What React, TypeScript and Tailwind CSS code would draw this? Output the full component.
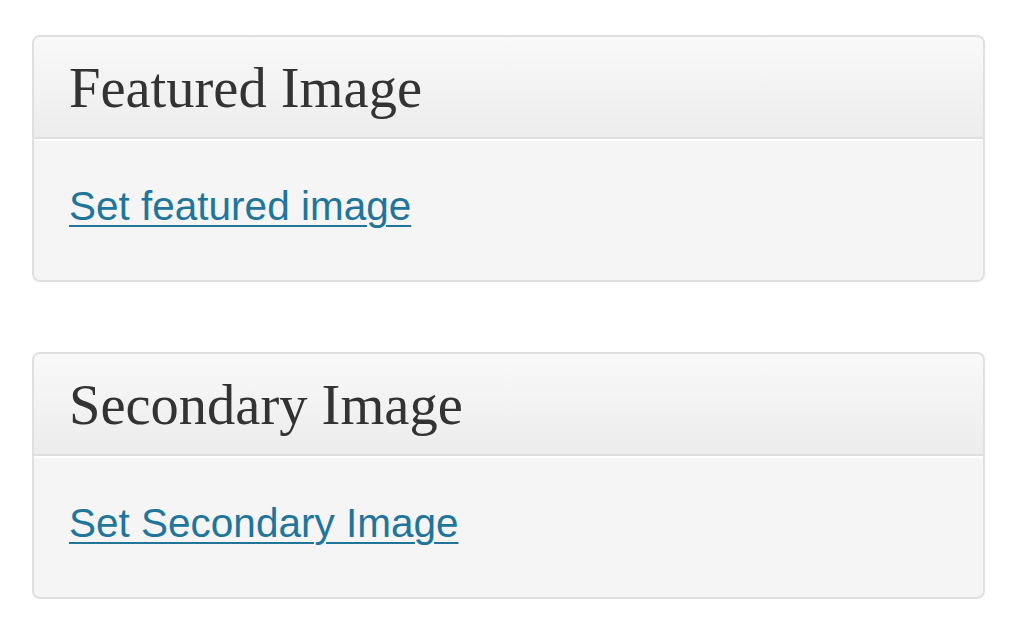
export default function App() {
  const boxes = [
    { title: "Featured Image", link: "Set featured image" },
    { title: "Secondary Image", link: "Set Secondary Image" },
  ];
  return (
    <div className="min-h-[641px] bg-white pt-[35px] pl-[32px] pr-[35px] flex flex-col gap-[70px]">
      {boxes.map((b) => (
        <div
          key={b.title}
          className="w-[953px] h-[247px] rounded-[8px] border-2 border-[#dfdfdf] bg-[#f5f5f5] overflow-hidden flex flex-col"
        >
          <div className="h-[102px] shrink-0 bg-gradient-to-b from-[#f9f9f9] to-[#ececec] border-b-2 border-[#dfdfdf] flex items-center pl-[35px]">
            <h2
              className="text-[56.5px] leading-none text-[#333] pt-[2px]"
              style={{ fontFamily: '"Liberation Serif", Georgia, serif' }}
            >
              {b.title}
            </h2>
          </div>
          <div className="border-t-2 border-white flex-1 flex items-start pl-[35px] pt-[45px]">
            <a
              href="#"
              className="text-[40.5px] leading-none text-[#21759b] underline decoration-2 underline-offset-[5px]"
              style={{ fontFamily: '"Liberation Sans", Arial, sans-serif' }}
            >
              {b.link}
            </a>
          </div>
        </div>
      ))}
    </div>
  );
}
